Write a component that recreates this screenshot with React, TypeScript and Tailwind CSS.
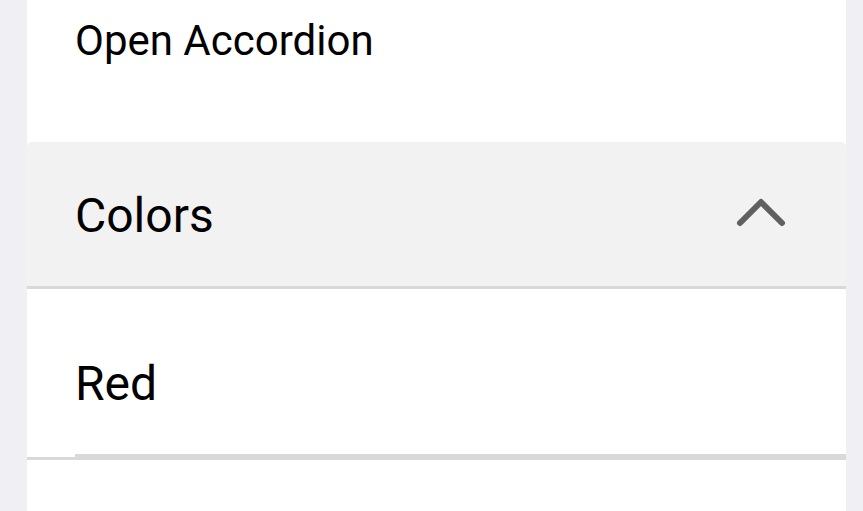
import React from "react";

export default function App() {
  return (
    <div
      className="w-[863px] h-[511px] overflow-hidden bg-[#efeff4] pl-[27px] pr-[17px] text-black"
      style={{ fontFamily: "Roboto, 'Noto Sans', sans-serif" }}
    >
      <div className="h-full bg-white flex flex-col">
        <div className="h-[142px] shrink-0 pl-[48px] pt-[16px]">
          <div className="text-[42px] leading-[49px]">Open Accordion</div>
        </div>
        <div className="h-[147px] shrink-0 flex items-center justify-between bg-[#f2f2f2] rounded-t-[5px] border-b-[3px] border-[#d9d9d9] pl-[48px] pr-[57px]">
          <span className="text-[48px] leading-[56px] mt-[3px]">Colors</span>
          <svg width="54" height="34" viewBox="0 0 54 34" className="mt-[-2px]">
            <polyline
              points="5,27 26,6 47,27"
              fill="none"
              stroke="#606060"
              strokeWidth="6"
              strokeLinecap="round"
              strokeLinejoin="round"
            />
          </svg>
        </div>
        <div className="shrink-0 border-b-[3px] border-[#d9d9d9]">
          <div className="ml-[48px] h-[168px] border-b-[3px] border-[#d9d9d9] pt-[67px]">
            <div className="text-[48px] leading-[56px]">Red</div>
          </div>
        </div>
        <div className="flex-1" />
      </div>
    </div>
  );
}
